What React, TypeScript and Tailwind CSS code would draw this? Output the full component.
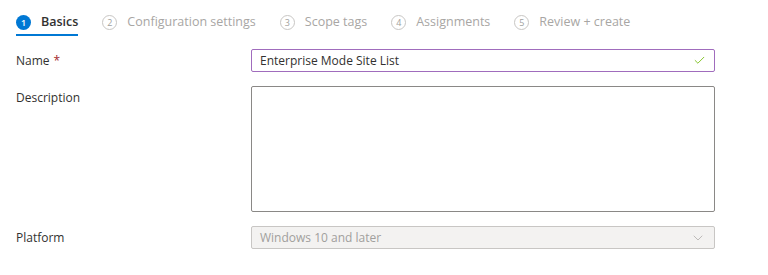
import { ChevronDown, Check } from 'lucide-react';

const steps = [
  { n: 1, label: 'Basics', active: true },
  { n: 2, label: 'Configuration settings', active: false },
  { n: 3, label: 'Scope tags', active: false },
  { n: 4, label: 'Assignments', active: false },
  { n: 5, label: 'Review + create', active: false },
];

export default function App() {
  return (
    <div
      className="w-[768px] h-[275px] bg-white text-[12px] text-[#323130] overflow-hidden"
      style={{ fontFamily: '"Segoe UI", "Open Sans", sans-serif' }}
    >
      {/* Wizard steps */}
      <nav className="flex items-start gap-[24px] pl-4 pt-[13px] text-[12.5px]">
        {steps.map((s) => (
          <div
            key={s.n}
            className={`flex items-center gap-[10px] h-[23px] pb-[2px] border-b-2 ${
              s.active ? 'border-[#0078d4]' : 'border-transparent'
            }`}
          >
            {s.active ? (
              <span className="w-[15px] h-[15px] rounded-full bg-[#0078d4] text-white text-[9px] font-semibold flex items-center justify-center">
                {s.n}
              </span>
            ) : (
              <span className="w-[15px] h-[15px] rounded-full border border-[#c8c6c4] text-[#a19f9d] text-[9px] flex items-center justify-center">
                {s.n}
              </span>
            )}
            <span
              className={`leading-none ${
                s.active ? 'font-semibold text-[#323130]' : 'text-[#a8a6a4]'
              }`}
            >
              {s.label}
            </span>
          </div>
        ))}
      </nav>

      {/* Form */}
      <div className="flex flex-col gap-[14px] pl-4 pt-[13px]">
        <div className="flex items-start">
          <label className="w-[235px] h-[23px] flex items-center">
            Name <span className="ml-1 text-[#a4262c]">*</span>
          </label>
          <div className="w-[464px] h-[23px] border border-[#a06cbd] rounded-[2px] flex items-center justify-between pl-2 pr-2">
            <span>Enterprise Mode Site List</span>
            <Check className="w-[13px] h-[13px] text-[#6bb700]" strokeWidth={1.5} />
          </div>
        </div>

        <div className="flex items-start">
          <label className="w-[235px] h-[23px] flex items-center">Description</label>
          <div className="w-[464px] h-[126px] border border-[#8a8886] rounded-[2px]" />
        </div>

        <div className="flex items-start">
          <label className="w-[235px] h-[23px] flex items-center">Platform</label>
          <div className="w-[464px] h-[23px] border border-[#c8c6c4] bg-[#f3f2f1] rounded-[2px] flex items-center justify-between pl-2 pr-2">
            <span className="text-[#a19f9d]">Windows 10 and later</span>
            <ChevronDown className="w-[16px] h-[16px] text-[#a19f9d]" strokeWidth={1} />
          </div>
        </div>
      </div>
    </div>
  );
}
